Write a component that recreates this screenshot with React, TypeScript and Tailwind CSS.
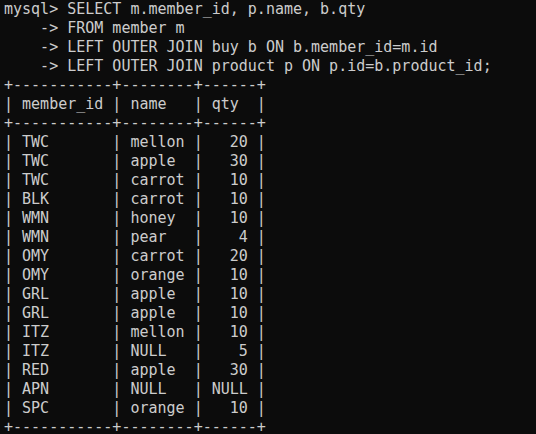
const lines = [
  "mysql> SELECT m.member_id, p.name, b.qty",
  "    -> FROM member m",
  "    -> LEFT OUTER JOIN buy b ON b.member_id=m.id",
  "    -> LEFT OUTER JOIN product p ON p.id=b.product_id;",
  "+-----------+--------+------+",
  "| member_id | name   | qty  |",
  "+-----------+--------+------+",
  "| TWC       | mellon |   20 |",
  "| TWC       | apple  |   30 |",
  "| TWC       | carrot |   10 |",
  "| BLK       | carrot |   10 |",
  "| WMN       | honey  |   10 |",
  "| WMN       | pear   |    4 |",
  "| OMY       | carrot |   20 |",
  "| OMY       | orange |   10 |",
  "| GRL       | apple  |   10 |",
  "| GRL       | apple  |   10 |",
  "| ITZ       | mellon |   10 |",
  "| ITZ       | NULL   |    5 |",
  "| RED       | apple  |   30 |",
  "| APN       | NULL   | NULL |",
  "| SPC       | orange |   10 |",
  "+-----------+--------+------+",
];

export default function App() {
  return (
    <div className="w-[536px] h-[434px] overflow-hidden bg-[#0c0c0c] text-[#cccccc] px-1">
      <pre className="font-['DejaVu_Sans_Mono',monospace] text-[15px] leading-[19px] whitespace-pre">
        {lines.join("\n")}
      </pre>
    </div>
  );
}
